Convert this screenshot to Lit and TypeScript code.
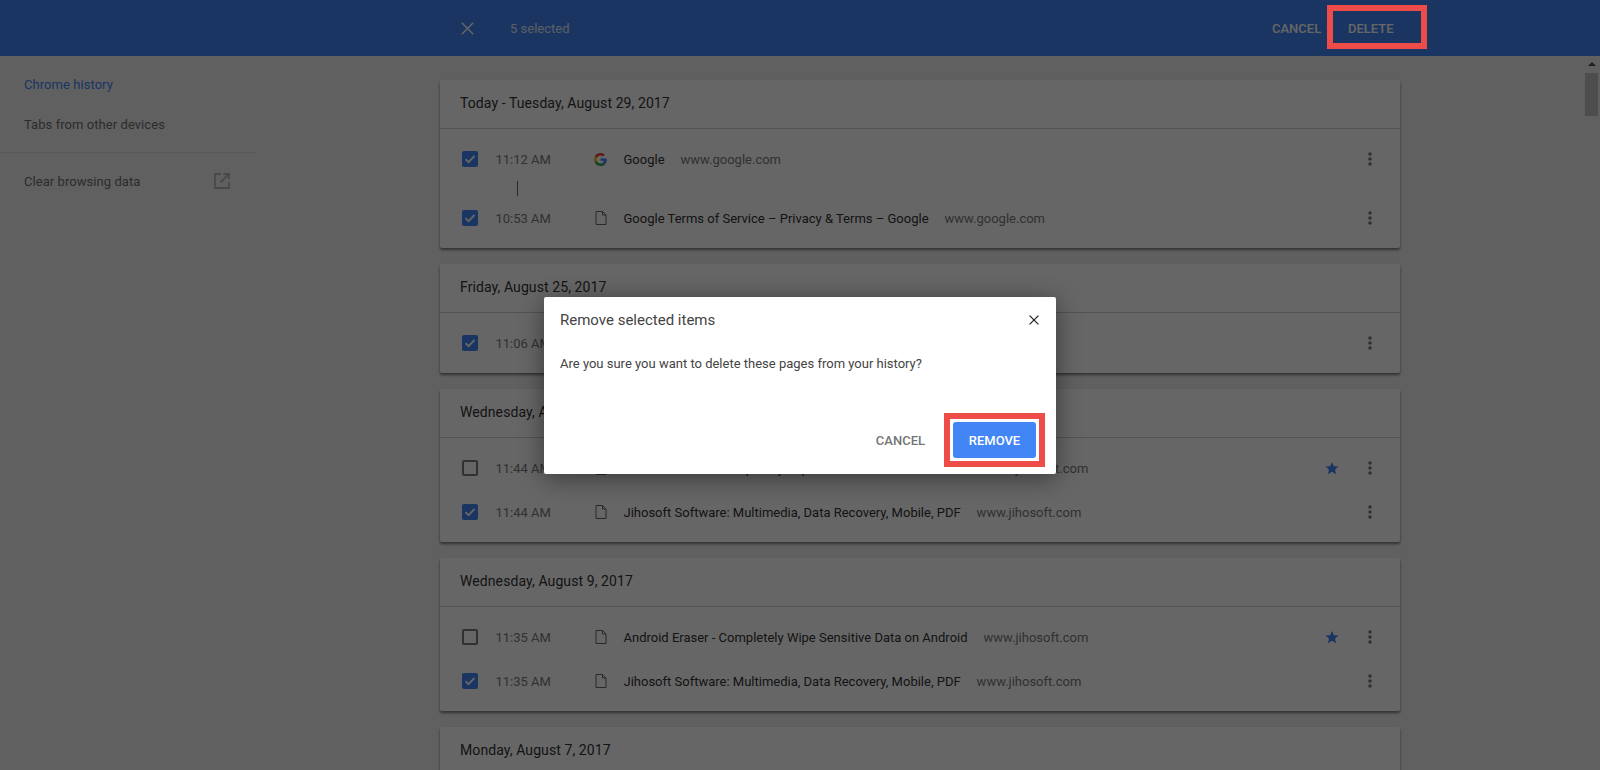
import {LitElement, html, css, svg} from 'lit';
import {customElement} from 'lit/decorators.js';

type Row = {
    checked: boolean;
    time: string;
    title: string;
    domain: string;
    icon?: string;
    star?: boolean;
};
type Day = {
    date: string;
    rows: Row[];
    gap?: boolean;
};

const JIHO = "Jihosoft Software: Multimedia, Data Recovery, Mobile, PDF";
const ANDROID = "Android Eraser - Completely Wipe Sensitive Data on Android";

const days: Day[] = [
    {date: "Today - Tuesday, August 29, 2017", gap: true, rows: [
	{checked: true, time: "11:12 AM", title: "Google", domain: "www.google.com", icon: "google"},
	{checked: true, time: "10:53 AM", title: "Google Terms of Service – Privacy & Terms – Google", domain: "www.google.com"},
    ]},
    {date: "Friday, August 25, 2017", rows: [
	{checked: true, time: "11:06 AM", title: "Jihosoft Software", domain: "www.jihosoft.com"},
    ]},
    {date: "Wednesday, August 16, 2017", rows: [
	{checked: false, time: "11:44 AM", title: ANDROID, domain: "www.jihosoft.com", star: true},
	{checked: true, time: "11:44 AM", title: JIHO, domain: "www.jihosoft.com"},
    ]},
    {date: "Wednesday, August 9, 2017", rows: [
	{checked: false, time: "11:35 AM", title: ANDROID, domain: "www.jihosoft.com", star: true},
	{checked: true, time: "11:35 AM", title: JIHO, domain: "www.jihosoft.com"},
    ]},
    {date: "Monday, August 7, 2017", rows: []},
];

const googleIcon = svg`<svg width="13" height="13" viewBox="0 0 48 48">
<path fill="#EA4335" d="M24 9.500c3.500 0 6.700 1.300 9.100 3.500l6.800-6.800C35.800 2.400 30.200 0 24 0 14.600 0 6.500 5.400 2.600 13.200l7.900 6.200C12.400 13.700 17.700 9.500 24 9.500z"/>
<path fill="#4285F4" d="M46.900 24.500c0-1.600-.1-3.100-.4-4.500H24v9h12.900c-.6 3-2.200 5.500-4.700 7.200l7.700 6c4.500-4.200 7-10.300 7-17.700z"/>
<path fill="#FBBC05" d="M10.500 28.600c-.5-1.400-.8-3-.8-4.600s.3-3.200.8-4.600l-7.900-6.200C.9 16.500 0 20.100 0 24s.9 7.500 2.600 10.800l7.900-6.200z"/>
<path fill="#34A853" d="M24 48c6.500 0 11.900-2.100 15.900-5.800l-7.700-6c-2.200 1.400-4.900 2.300-8.200 2.300-6.300 0-11.600-4.200-13.500-9.900l-7.900 6.200C6.500 42.600 14.600 48 24 48z"/>
</svg>`;

const docIcon = svg`<svg width="16" height="16" viewBox="0 0 16 16" fill="none" stroke="#666" stroke-width="1">
<path d="M3 1.500h6.500l3.500 3.500v9.500H3zM9.500 1.500V5H13"/>
</svg>`;

const dotsIcon = svg`<svg width="4" height="14" viewBox="0 0 4 14" fill="#757575">
<circle cx="2" cy="2" r="1.700"/><circle cx="2" cy="7" r="1.700"/><circle cx="2" cy="12" r="1.700"/>
</svg>`;

const starIcon = svg`<svg width="14" height="14" viewBox="0 0 24 24" fill="#4285f4">
<path d="M12 1.500l3.200 7.300 8 .7-6 5.300 1.800 7.800-7-4.100-7 4.100 1.800-7.800-6-5.300 8-.7z"/>
</svg>`;

const closeIcon = (size: number, color: string, width: number) => svg`<svg width=${size} height=${size} viewBox="0 0 12 12" fill="none" stroke=${color} stroke-width=${width}>
<path d="M.7 .7l10.600 10.600M11.300 .7L.7 11.300"/>
</svg>`;

const checkIcon = svg`<svg width="16" height="16" viewBox="0 0 16 16" fill="none" stroke="#fff" stroke-width="1.800">
<path d="M3.500 8.200l3 3 6-6.200"/>
</svg>`;

const externalIcon = svg`<svg width="16" height="16" viewBox="0 0 16 16" fill="none" stroke="#b5b5b5" stroke-width="1.800">
<path d="M7 1H1v14h14V9M9.500 1H15v5.500M15 1L6.500 9.500"/>
</svg>`;

@customElement('app-root')
class AppRoot extends LitElement {
    static styles = css`
:host {
display: block;
position: relative;
height: 770px;
overflow: hidden;
background-color: #f1f1f1;
font-family: Roboto, "Liberation Sans", sans-serif;
font-size: 13px;
color: #333;
}
.toolbar {
height: 56px;
background-color: #4285f4;
color: #fff;
display: flex;
align-items: center;
padding-left: 461px;
}
.toolbar-close {
display: flex;
width: 49px;
}
.toolbar-count {
flex: 1;
color: #fff;
opacity: .85;
}
.toolbar-btn {
font-weight: 500;
width: 76px;
}
.toolbar-btn.last {
width: 252px;
}
.body {
display: flex;
height: 714px;
}
.side {
width: 256px;
flex: none;
letter-spacing: .06px;
color: #6e6e6e;
}
.side-item {
height: 40px;
display: flex;
align-items: center;
padding-left: 24px;
}
.side-item.active {
color: #4285f4;
margin-top: 8px;
}
.side-sep {
border-top: 1px solid #dcdcdc;
margin-top: 8px;
}
.side-clear {
justify-content: space-between;
padding-right: 26px;
margin-top: 8px;
}
.main {
flex: 1;
overflow: hidden;
padding: 24px 0 0 184px;
}
.card {
width: 960px;
background-color: #fff;
border-radius: 2px;
box-shadow: 0 2px 3px rgba(0, 0, 0, .5);
margin-bottom: 16px;
}
.card-title {
height: 46px;
padding: 0 0 2px 20px;
display: flex;
align-items: center;
font-size: 14px;
letter-spacing: .09px;
color: #333;
border-bottom: 1px solid #d0d0d0;
}
.list {
padding: 8px 0;
}
.row {
height: 44px;
display: flex;
align-items: center;
padding-left: 22px;
}
.box {
width: 16px;
height: 16px;
box-sizing: border-box;
border-radius: 2px;
border: 2px solid #7a7a7a;
flex: none;
margin-right: 17.5px;
display: flex;
}
.box.on {
border: none;
background-color: #4285f4;
}
.time {
width: 97px;
flex: none;
color: #7a7a7a;
}
.fav {
width: 16px;
height: 16px;
flex: none;
margin-right: 15px;
display: flex;
align-items: center;
justify-content: center;
}
.row-title {
color: #333;
margin-right: 16px;
}
.domain {
flex: 1;
color: #7a7a7a;
}
.star {
display: flex;
margin-right: 29px;
}
.dots {
display: flex;
margin-right: 28px;
}
.caret {
height: 15px;
width: 1px;
margin-left: 77px;
background-color: #666;
}
.scrollbar {
width: 17px;
flex: none;
display: flex;
flex-direction: column;
align-items: center;
padding-top: 6px;
box-sizing: border-box;
}
.arrow {
width: 0;
height: 0;
border-left: 4px solid transparent;
border-right: 4px solid transparent;
border-bottom: 4px solid #505050;
margin-bottom: 7px;
}
.thumb {
width: 13px;
height: 43px;
background-color: #c1c1c1;
}
.scrim {
position: absolute;
inset: 0;
background-color: rgba(0, 0, 0, .6);
}
.mark {
position: absolute;
left: 1327px;
top: 5px;
width: 100px;
height: 44px;
box-sizing: border-box;
border: 6px solid #ee4c48;
}
.dialog {
position: absolute;
left: 544px;
top: 297px;
width: 512px;
height: 177px;
box-sizing: border-box;
background-color: #fff;
border-radius: 2px;
box-shadow: 0 4px 24px rgba(0, 0, 0, .45);
padding: 0 20px 16px 16px;
display: flex;
flex-direction: column;
}
.dialog-head {
height: 46px;
margin-right: -3px;
display: flex;
align-items: center;
justify-content: space-between;
font-size: 15px;
color: #444;
}
.dialog-close {
display: flex;
}
.dialog-text {
flex: 1;
margin-top: 13px;
line-height: 16px;
color: #444;
}
.dialog-foot {
display: flex;
align-items: center;
justify-content: flex-end;
}
.btn-cancel {
font-weight: 500;
color: #757575;
margin-right: 28px;
}
.btn-remove {
position: relative;
width: 83px;
height: 36px;
border-radius: 3px;
background-color: #4285f4;
color: #fff;
font-weight: 500;
display: flex;
align-items: center;
justify-content: center;
}
.btn-remove::after {
content: "";
position: absolute;
inset: -9px;
border: 6px solid #ee4c48;
}
`;

    rowItem(r: Row) {
	return html`<div class="row">
<span class="box ${r.checked ? 'on' : ''}">${r.checked ? checkIcon : ''}</span>
<span class="time">${r.time}</span>
<span class="fav">${r.icon == "google" ? googleIcon : docIcon}</span>
<span class="row-title">${r.title}</span>
<span class="domain">${r.domain}</span>
${r.star ? html`<span class="star">${starIcon}</span>` : ''}
<span class="dots">${dotsIcon}</span>
</div>`;
    }

    dayCard(d: Day) {
	let items = [];
	for (let i = 0; i < d.rows.length; i++) {
	    items.push(this.rowItem(d.rows[i]));
	    if (d.gap && i == 0) {
		items.push(html`<div class="caret"></div>`);
	    }
	}
	return html`<section class="card">
<div class="card-title">${d.date}</div>
<div class="list">${items}</div>
</section>`;
    }

    render() {
	return html`
<div class="toolbar">
<span class="toolbar-close">${closeIcon(13, "#fff", 1.3)}</span>
<span class="toolbar-count">5 selected</span>
<span class="toolbar-btn">CANCEL</span>
<span class="toolbar-btn last">DELETE</span>
</div>
<div class="body">
<nav class="side">
<div class="side-item active">Chrome history</div>
<div class="side-item">Tabs from other devices</div>
<div class="side-sep"></div>
<div class="side-item side-clear">Clear browsing data ${externalIcon}</div>
</nav>
<main class="main">${days.map((d) => this.dayCard(d))}</main>
<div class="scrollbar"><div class="arrow"></div><div class="thumb"></div></div>
</div>
<div class="scrim"></div>
<div class="mark"></div>
<div class="dialog">
<div class="dialog-head">Remove selected items<span class="dialog-close">${closeIcon(10, "#222", 1.5)}</span></div>
<div class="dialog-text">Are you sure you want to delete these pages from your history?</div>
<div class="dialog-foot">
<span class="btn-cancel">CANCEL</span>
<span class="btn-remove">REMOVE</span>
</div>
</div>`;
    }
}
